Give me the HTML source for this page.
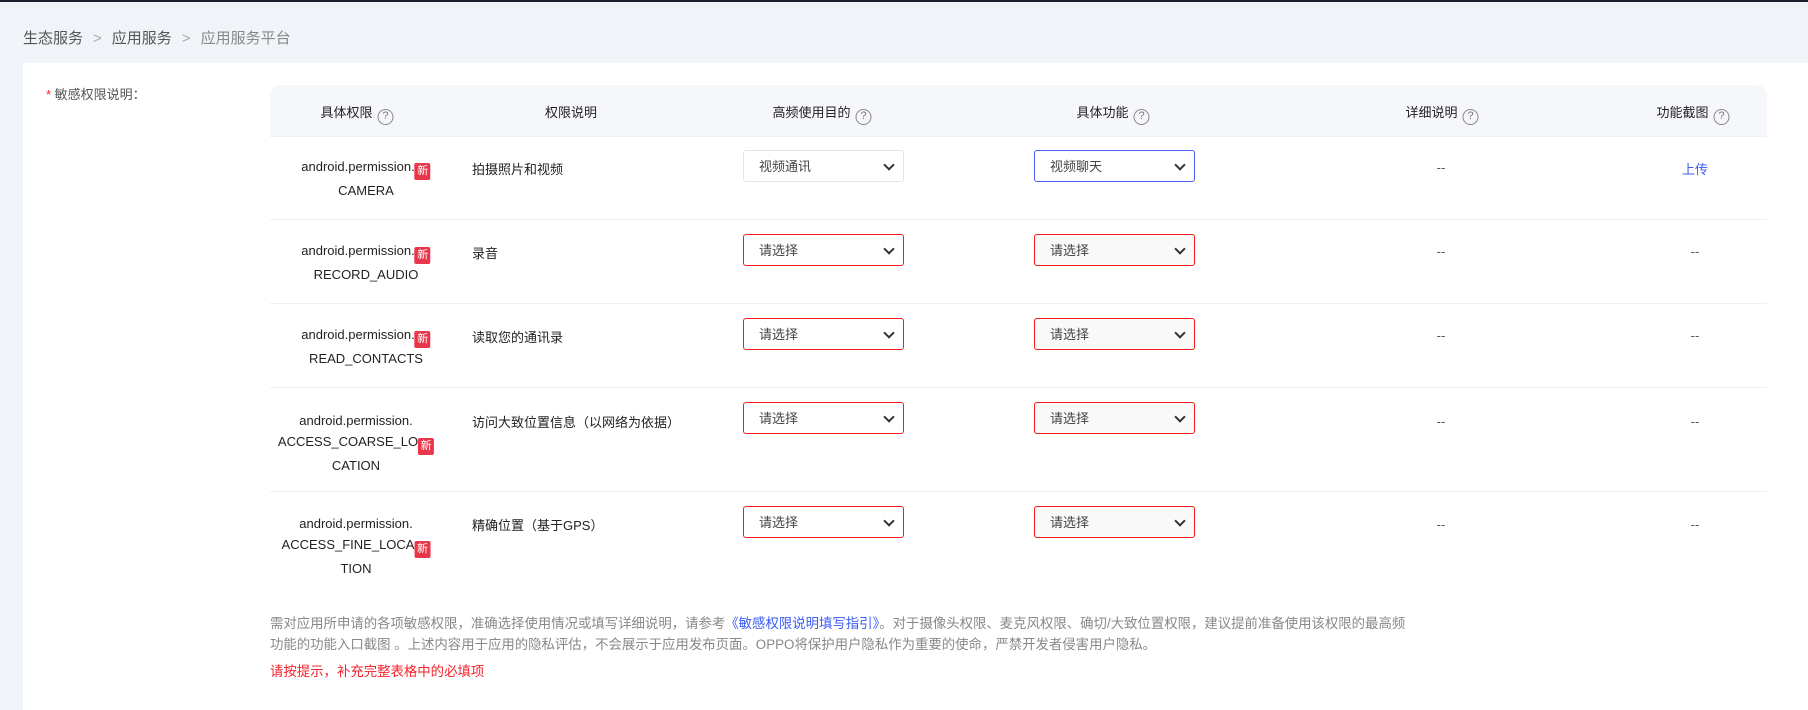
<!DOCTYPE html>
<html><head><meta charset="utf-8"><style>
*{margin:0;padding:0;box-sizing:border-box}
body{width:1808px;height:710px;background:#f0f3f8;font-family:"Liberation Sans","Noto Sans CJK SC",sans-serif;font-size:13px;color:#222;position:relative;overflow:hidden}
.a{position:absolute;white-space:nowrap}
.top{position:absolute;left:0;top:0;width:1808px;height:2px;background:#1a1f2e}
.crumb{left:23px;top:27px;font-size:15px;color:#555}
.crumb .s{color:#aaa;margin:0 10px}
.crumb .l{color:#888}
.panel{position:absolute;left:23px;top:63px;right:0;bottom:0;background:#fff}
.hdr{position:absolute;left:270px;top:85px;width:1497px;height:51px;background:#f6f7fa;border-radius:10px 10px 0 0}
.q{display:inline-block;width:16px;height:16px;border:1.3px solid #888;border-radius:50%;font-size:11px;line-height:13px;text-align:center;color:#777;margin-left:5px;vertical-align:-2px}
.hl{top:102px;transform:translateX(-50%);color:#222}
.line{position:absolute;left:270px;width:1497px;height:1px;background:#eef0f3}
.perm{text-align:center;line-height:21px;transform:translateX(-50%)}
.new{display:inline-block;background:#e8374b;color:#fff;font-size:11px;width:16px;height:17px;line-height:17px;text-align:center;border-radius:2px;vertical-align:-3px}
.sel{position:absolute;height:32px;width:161px;border:1px solid #f21c1c;border-radius:3px;background:#fff;padding-left:15px;padding-top:2px;line-height:28px;color:#444;font-size:13px}
.sel.b{background:#f9f9f9}
.sel:after{content:"";position:absolute;right:10px;top:10px;width:6px;height:6px;border-right:2px solid #333;border-bottom:2px solid #333;transform:rotate(45deg)}
.dash{color:#555;transform:translateX(-50%)}
</style></head><body>
<div class="top"></div>
<div class="a crumb">生态服务<span class="s">&gt;</span>应用服务<span class="s">&gt;</span><span class="l">应用服务平台</span></div>
<div class="panel"></div>
<div class="a" style="left:46px;top:84px;color:#555;font-size:13px"><span style="color:#f22">*</span> 敏感权限说明：</div>
<div class="hdr"></div>
<div class="a hl" style="left:357px">具体权限<span class="q">?</span></div>
<div class="a hl" style="left:571px">权限说明</div>
<div class="a hl" style="left:822px">高频使用目的<span class="q">?</span></div>
<div class="a hl" style="left:1113px">具体功能<span class="q">?</span></div>
<div class="a hl" style="left:1442px">详细说明<span class="q">?</span></div>
<div class="a hl" style="left:1693px">功能截图<span class="q">?</span></div>
<div class="line" style="top:136px"></div>
<div class="line" style="top:219px"></div>
<div class="line" style="top:303px"></div>
<div class="line" style="top:387px"></div>
<div class="line" style="top:491px"></div>

<div class="a perm" style="left:366px;top:156px">android.permission.<span class="new">新</span><br>CAMERA</div>
<div class="a" style="left:472px;top:159px">拍摄照片和视频</div>
<div class="sel" style="left:743px;top:150px;border-color:#e4e4e4">视频通讯</div>
<div class="sel" style="left:1034px;top:150px;border-color:#4a5ef0">视频聊天</div>
<div class="a dash" style="left:1441px;top:160px">--</div>
<div class="a" style="left:1695px;top:159px;transform:translateX(-50%);color:#3b5bf5">上传</div>

<div class="a perm" style="left:366px;top:240px">android.permission.<span class="new">新</span><br>RECORD_AUDIO</div>
<div class="a" style="left:472px;top:243px">录音</div>
<div class="sel" style="left:743px;top:234px">请选择</div>
<div class="sel b" style="left:1034px;top:234px">请选择</div>
<div class="a dash" style="left:1441px;top:244px">--</div>
<div class="a dash" style="left:1695px;top:244px">--</div>

<div class="a perm" style="left:366px;top:324px">android.permission.<span class="new">新</span><br>READ_CONTACTS</div>
<div class="a" style="left:472px;top:327px">读取您的通讯录</div>
<div class="sel" style="left:743px;top:318px">请选择</div>
<div class="sel b" style="left:1034px;top:318px">请选择</div>
<div class="a dash" style="left:1441px;top:328px">--</div>
<div class="a dash" style="left:1695px;top:328px">--</div>

<div class="a perm" style="left:356px;top:410px">android.permission.<br>ACCESS_COARSE_LO<span class="new">新</span><br>CATION</div>
<div class="a" style="left:472px;top:412px">访问大致位置信息（以网络为依据）</div>
<div class="sel" style="left:743px;top:402px">请选择</div>
<div class="sel b" style="left:1034px;top:402px">请选择</div>
<div class="a dash" style="left:1441px;top:414px">--</div>
<div class="a dash" style="left:1695px;top:414px">--</div>

<div class="a perm" style="left:356px;top:513px">android.permission.<br>ACCESS_FINE_LOCA<span class="new">新</span><br>TION</div>
<div class="a" style="left:472px;top:515px">精确位置（基于GPS）</div>
<div class="sel" style="left:743px;top:506px">请选择</div>
<div class="sel b" style="left:1034px;top:506px">请选择</div>
<div class="a dash" style="left:1441px;top:517px">--</div>
<div class="a dash" style="left:1695px;top:517px">--</div>

<div class="a" style="left:270px;top:613px;color:#888;font-size:13.4px;line-height:21px">需对应用所申请的各项敏感权限，准确选择使用情况或填写详细说明，请参考<span style="color:#3b5bf5">《敏感权限说明填写指引》</span>。对于摄像头权限、麦克风权限、确切/大致位置权限，建议提前准备使用该权限的最高频<br>功能的功能入口截图 。上述内容用于应用的隐私评估，不会展示于应用发布页面。OPPO将保护用户隐私作为重要的使命，严禁开发者侵害用户隐私。</div>
<div class="a" style="left:270px;top:660px;color:#f5222d;font-size:13.4px">请按提示，补充完整表格中的必填项</div>
</body></html>
